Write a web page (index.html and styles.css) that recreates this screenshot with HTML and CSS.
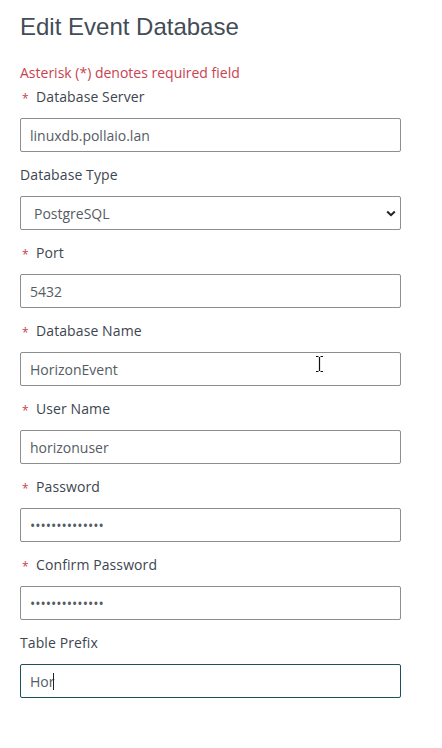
FILE: index.html
```html
<!DOCTYPE html>
<html lang="en">
<head>
<meta charset="utf-8">
<title>Edit Event Database</title>
<link rel="stylesheet" href="styles.css">
</head>
<body>
<main class="page">
  <h1 class="title">Edit Event Database</h1>
  <p class="note">Asterisk (*) denotes required field</p>
  <form class="form">
    <div class="group">
      <label class="label"><span class="req">*</span>Database Server</label>
      <input class="field" type="text" value="linuxdb.pollaio.lan">
    </div>
    <div class="group">
      <label class="label">Database Type</label>
      <select class="field select">
        <option>PostgreSQL</option>
      </select>
    </div>
    <div class="group">
      <label class="label"><span class="req">*</span>Port</label>
      <input class="field" type="text" value="5432">
    </div>
    <div class="group">
      <label class="label"><span class="req">*</span>Database Name</label>
      <div class="field-wrap">
        <input class="field" type="text" value="HorizonEvent">
        <svg class="ibeam" width="9" height="18" viewBox="0 0 9 18"><path d="M1 1.5h2.5M5.5 1.5H8M4.5 2v14M1 16.5h2.5M5.5 16.5H8" stroke="#111" stroke-width="1.2" fill="none"/></svg>
      </div>
    </div>
    <div class="group">
      <label class="label"><span class="req">*</span>User Name</label>
      <input class="field" type="text" value="horizonuser">
    </div>
    <div class="group">
      <label class="label"><span class="req">*</span>Password</label>
      <input class="field" type="password" value="abcdefghijklmn">
    </div>
    <div class="group">
      <label class="label"><span class="req">*</span>Confirm Password</label>
      <input class="field" type="password" value="abcdefghijklmn">
    </div>
    <div class="group">
      <label class="label">Table Prefix</label>
      <div class="field-wrap">
        <input class="field focused" type="text" value="Hor">
        <span class="caret"></span>
      </div>
    </div>
  </form>
</main>
</body>
</html>
```

FILE: styles.css
```css
html, body {
  margin: 0;
  padding: 0;
  background: #ffffff;
}

.page {
  padding: 13px 0 0 20px;
  width: 381px;
  font-family: "Open Sans", "Noto Sans", sans-serif;
}

.title {
  margin: 0;
  font-family: "Liberation Sans", Arial, sans-serif;
  font-weight: normal;
  font-size: 24px;
  line-height: 28px;
  color: #434c57;
}

.note {
  margin: 22px 0 0 0;
  font-size: 14px;
  line-height: 20px;
  color: #c9424f;
}

.form {
  margin-top: 4px;
  display: flex;
  flex-direction: column;
  gap: 13px;
}

.group {
  display: flex;
  flex-direction: column;
  gap: 11px;
}

.label {
  display: flex;
  align-items: center;
  font-size: 14px;
  line-height: 20px;
  height: 20px;
  color: #3d4550;
  font-weight: 500;
  letter-spacing: 0.1px;
}

.req {
  color: #c9424f;
  width: 14px;
  padding-left: 2px;
  font-size: 12px;
  line-height: 20px;
  position: relative;
  top: 2px;
}

.field-wrap {
  position: relative;
}

.field {
  box-sizing: border-box;
  display: block;
  width: 381px;
  height: 34px;
  margin: 0;
  padding: 0 9px;
  border: 1px solid #8e8e8e;
  border-radius: 2px;
  background: #fff;
  font-family: "Open Sans", "Noto Sans", sans-serif;
  font-size: 14px;
  color: #555c63;
  outline: none;
}

.select {
  appearance: none;
  -webkit-appearance: none;
  padding: 0 13px;
  background-image: url("data:image/svg+xml,%3Csvg xmlns='http://www.w3.org/2000/svg' width='10' height='7' viewBox='0 0 10 7'%3E%3Cpath d='M1.2 1.5L5 5.2L8.8 1.5' stroke='%23222' stroke-width='2' fill='none'/%3E%3C/svg%3E");
  background-repeat: no-repeat;
  background-position: right 4px center;
}

.focused {
  border-color: #1f4f5c;
  caret-color: transparent;
}

.caret {
  position: absolute;
  left: 33px;
  top: 9px;
  width: 1px;
  height: 17px;
  background: #222;
}

.ibeam {
  position: absolute;
  left: 295px;
  top: 3px;
}
```
